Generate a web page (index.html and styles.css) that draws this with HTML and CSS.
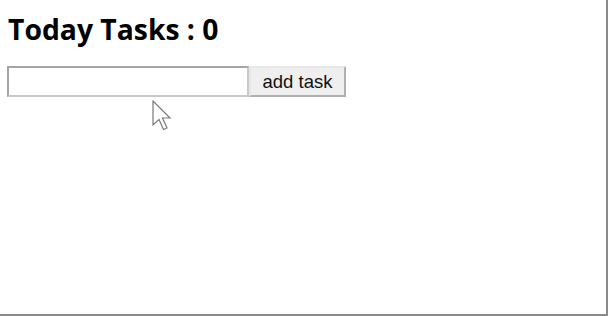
FILE: index.html
```html
<!DOCTYPE html>
<html>
<head>
<meta charset="utf-8">
<link rel="stylesheet" href="styles.css">
</head>
<body>
<div class="frame">
  <h1 class="title">Today Tasks : 0</h1>
  <div class="form">
    <input class="task-input" type="text">
    <button class="add-btn">add task</button>
  </div>
  <svg class="cursor" width="22" height="32" viewBox="0 0 22 32">
    <path d="M1 1 L1 25 L7 19.5 L11.5 29.5 L15 28 L10.5 18 L18 18 Z" fill="#fff" stroke="#7a7a7a" stroke-width="1.2" stroke-linejoin="miter"/>
  </svg>
</div>
</body>
</html>
```
FILE: styles.css
```css
html, body {
  margin: 0;
  padding: 0;
  background: #fff;
}
.frame {
  position: relative;
  width: 608px;
  height: 316px;
  box-sizing: border-box;
  border-right: 2px solid #8a8a8a;
  border-bottom: 2px solid #8a8a8a;
  padding: 12px 8px 0 7px;
  font-family: "Open Sans", "Noto Sans", sans-serif;
}
.title {
  margin: 0 0 0 1px;
  font-size: 28.3px;
  font-weight: 700;
  line-height: 34px;
  color: #000;
}
.form {
  display: flex;
  margin-top: 20px;
}
.task-input {
  width: 242px;
  height: 31px;
  box-sizing: border-box;
  margin: 0;
  border: 2px solid;
  border-color: #a5a5a5 #c8c8c8 #c8c8c8 #a5a5a5;
  background: #fff;
  padding: 0 4px;
}
.add-btn {
  width: 97px;
  height: 31px;
  box-sizing: border-box;
  margin: 0;
  padding: 0 4px;
  border: 2px solid;
  border-color: #e8e8e8 #b0b0b0 #b0b0b0 #e8e8e8;
  background: #efefef;
  font-family: "Liberation Sans", Arial, sans-serif;
  font-size: 18.5px;
  color: #111;
}
.cursor {
  position: absolute;
  left: 152px;
  top: 100px;
}
```
